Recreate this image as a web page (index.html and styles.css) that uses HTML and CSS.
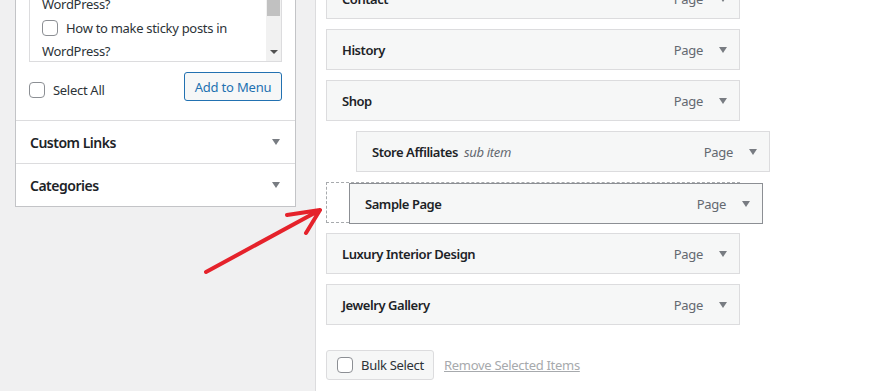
FILE: index.html
```html
<!DOCTYPE html>
<html>
<head>
    <title>Menus ‹ WordPress</title>
    <link rel="stylesheet" href="styles.css">
</head>
<body>
    <div class="screen">
        <div class="sidebar">
            <div class="panel">
                <div class="panel-inside">
                    <div class="list-box">
                        <div class="list-items">
                            <div class="list-line">WordPress?</div>
                            <label class="list-line">
                                <span class="checkbox"></span>
                                How to make sticky posts in
                            </label>
                            <div class="list-line last">WordPress?</div>
                        </div>
                        <div class="scrollbar">
                            <div class="scroll-thumb"></div>
                            <div class="scroll-space"></div>
                            <div class="scroll-down"></div>
                        </div>
                    </div>
                    <div class="panel-actions">
                        <label class="select-all">
                            <span class="checkbox"></span>
                            Select All
                        </label>
                        <button class="add-button">Add to Menu</button>
                    </div>
                </div>
                <div class="accordion">
                    <span>Custom Links</span>
                    <span class="toggle"></span>
                </div>
                <div class="accordion">
                    <span>Categories</span>
                    <span class="toggle"></span>
                </div>
            </div>
        </div>

        <div class="menu-area">
            <ul class="menu-list">
                <li class="menu-item">
                    <span class="item-title">Contact</span>
                    <span class="item-controls"><span class="item-type">Page</span><span class="toggle"></span></span>
                </li>
                <li class="menu-item">
                    <span class="item-title">History</span>
                    <span class="item-controls"><span class="item-type">Page</span><span class="toggle"></span></span>
                </li>
                <li class="menu-item">
                    <span class="item-title">Shop</span>
                    <span class="item-controls"><span class="item-type">Page</span><span class="toggle"></span></span>
                </li>
                <li class="menu-item depth-1">
                    <span class="item-title">Store Affiliates <em class="sub-label">sub item</em></span>
                    <span class="item-controls"><span class="item-type">Page</span><span class="toggle"></span></span>
                </li>
                <li class="drop-slot">
                    <div class="placeholder"></div>
                    <div class="menu-item dragging">
                        <span class="item-title">Sample Page</span>
                        <span class="item-controls"><span class="item-type">Page</span><span class="toggle"></span></span>
                    </div>
                </li>
                <li class="menu-item">
                    <span class="item-title">Luxury Interior Design</span>
                    <span class="item-controls"><span class="item-type">Page</span><span class="toggle"></span></span>
                </li>
                <li class="menu-item">
                    <span class="item-title">Jewelry Gallery</span>
                    <span class="item-controls"><span class="item-type">Page</span><span class="toggle"></span></span>
                </li>
            </ul>

            <div class="bulk-row">
                <label class="bulk-button">
                    <span class="checkbox"></span>
                    Bulk Select
                </label>
                <a class="remove-link" href="#">Remove Selected Items</a>
            </div>
        </div>

        <svg class="pointer-arrow" width="130" height="76" viewBox="0 0 130 76">
            <path d="M6 67 L120 5 M120 5 L87 10 M120 5 L106 28" fill="none" stroke="#e5222b" stroke-width="4" stroke-linecap="round" stroke-linejoin="round"/>
        </svg>
    </div>
</body>
</html>
```

FILE: styles.css
```css
* {
    box-sizing: border-box;
}
body {
    margin: 0;
    font-family: "Noto Sans", "Open Sans", sans-serif;
    font-size: 13px;
    letter-spacing: -0.3px;
    color: #1d2327;
}
.screen {
    position: relative;
    display: flex;
    height: 391px;
    overflow: hidden;
}
.sidebar {
    width: 316px;
    background-color: #f0f0f1;
    border-right: 1px solid #dcdcde;
    flex-shrink: 0;
}
.panel {
    margin-left: 15px;
    width: 281px;
    background-color: #ffffff;
    border: 1px solid #c3c4c7;
    border-top: none;
}
.panel-inside {
    padding: 0 13px;
}
.list-box {
    display: flex;
    height: 62px;
    border: 1px solid #dcdcde;
    border-top: none;
    overflow: hidden;
}
.list-items {
    flex-grow: 1;
    display: flex;
    flex-direction: column;
    justify-content: flex-end;
    padding-left: 12px;
    color: #2c3338;
}
.list-line {
    display: flex;
    align-items: center;
    gap: 8px;
    height: 23.5px;
    flex-shrink: 0;
    white-space: nowrap;
}
.list-line.last {
    margin-bottom: -2px;
}
.scrollbar {
    width: 15px;
    background-color: #f1f1f1;
    display: flex;
    flex-direction: column;
    align-items: center;
}
.scroll-thumb {
    width: 13px;
    height: 16px;
    background-color: #c1c1c1;
}
.scroll-space {
    flex-grow: 1;
}
.scroll-down {
    width: 0;
    height: 0;
    border-left: 4px solid transparent;
    border-right: 4px solid transparent;
    border-top: 4px solid #505050;
    margin-bottom: 7px;
}
.checkbox {
    display: inline-block;
    width: 16px;
    height: 16px;
    border: 1px solid #8c8f94;
    border-radius: 4px;
    background-color: #ffffff;
    flex-shrink: 0;
}
.panel-actions {
    display: flex;
    justify-content: space-between;
    align-items: flex-start;
    padding: 10px 0 19px 0;
}
.select-all {
    display: flex;
    align-items: center;
    gap: 8px;
    margin-top: 9px;
    color: #2c3338;
}
.add-button {
    font-family: inherit;
    font-size: 13px;
    letter-spacing: -0.2px;
    color: #2271b1;
    background-color: #f6f7f7;
    border: 1px solid #2271b1;
    border-radius: 3px;
    height: 29px;
    width: 98px;
    padding: 0;
}
.accordion {
    display: flex;
    justify-content: space-between;
    align-items: center;
    height: 43px;
    border-top: 1px solid #dcdcde;
    padding: 0 15px 0 14px;
    font-size: 14px;
    font-weight: 600;
    letter-spacing: -0.5px;
}
.toggle {
    width: 0;
    height: 0;
    border-left: 4px solid transparent;
    border-right: 4px solid transparent;
    border-top: 6px solid #787c82;
}
.menu-area {
    flex-grow: 1;
    background-color: #ffffff;
    padding-left: 10px;
}
.menu-list {
    list-style: none;
    margin: -22px 0 0 0;
    padding: 0;
}
.menu-item {
    display: flex;
    justify-content: space-between;
    align-items: center;
    width: 414px;
    height: 41px;
    padding: 0 12px 0 15px;
    background-color: #f6f7f7;
    border: 1px solid #dcdcde;
    margin-bottom: 10px;
    font-weight: 600;
    letter-spacing: -0.45px;
    white-space: nowrap;
}
.menu-item.depth-1 {
    margin-left: 30px;
}
.sub-label {
    font-weight: 400;
    color: #646970;
    margin-left: 3px;
    letter-spacing: -0.3px;
}
.item-controls {
    display: flex;
    align-items: center;
    gap: 16px;
}
.item-type {
    font-weight: 400;
    color: #646970;
    letter-spacing: -0.3px;
}
.drop-slot {
    position: relative;
    margin-bottom: 10px;
}
.placeholder {
    width: 414px;
    height: 41px;
    border: 1px dashed #a7aaad;
}
.menu-item.dragging {
    position: absolute;
    top: 1px;
    left: 23px;
    margin: 0;
    border-color: #8c8f94;
}
.bulk-row {
    display: flex;
    align-items: center;
    gap: 10px;
    margin-top: 25px;
}
.bulk-button {
    display: flex;
    align-items: center;
    gap: 8px;
    height: 30px;
    width: 108px;
    padding: 0 10px;
    background-color: #f6f7f7;
    border: 1px solid #dcdcde;
    border-radius: 3px;
    color: #2c3338;
    white-space: nowrap;
}
.remove-link {
    color: #a7aaad;
    text-decoration: underline;
}
.pointer-arrow {
    position: absolute;
    left: 200px;
    top: 205px;
}
```
